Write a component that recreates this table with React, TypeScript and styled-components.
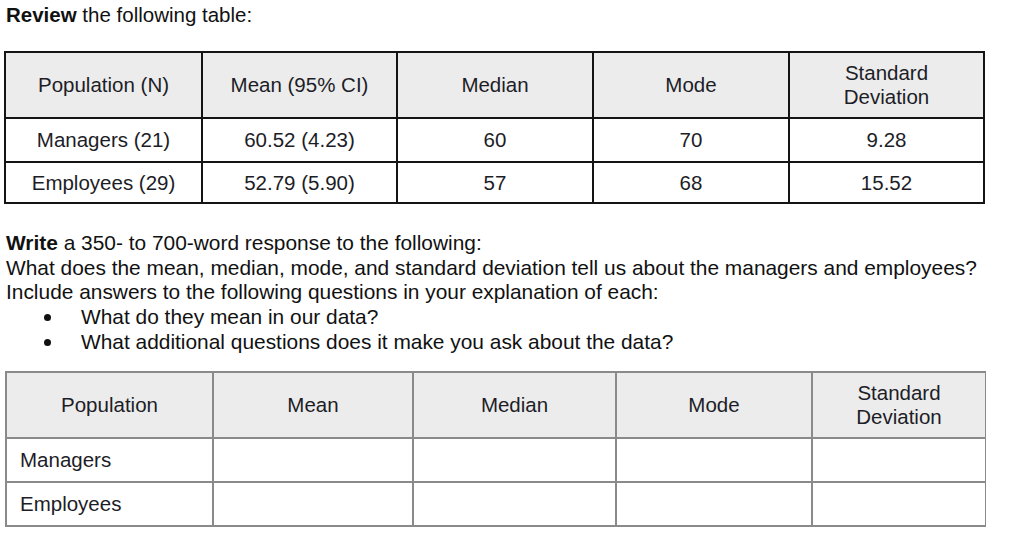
import React from "react";
import styled, { createGlobalStyle } from "styled-components";

const Global = createGlobalStyle`
  html, body { margin: 0; padding: 0; background: #ffffff; }
  body { font-family: "Liberation Sans", Arial, sans-serif; color: #1c1c24; }
`;

const Page = styled.div`
  width: 1024px;
  height: 542px;
  box-sizing: border-box;
  padding: 3px 0 0 5px;
  overflow: hidden;
`;

const Title = styled.p`
  margin: 0 0 24px 1px;
  font-size: 20.5px;
  line-height: 24px;
  color: #111;
`;

const Table = styled.div<{ $cols: string; $line: string; $width: number; $shift: number }>`
  display: grid;
  grid-template-columns: ${(p) => p.$cols};
  width: ${(p) => p.$width}px;
  margin-left: ${(p) => p.$shift}px;
  border: 2px solid ${(p) => p.$line};
  box-sizing: border-box;
  background: ${(p) => p.$line};
  gap: 2px;
`;

const Head = styled.div`
  background: #ececec;
  height: 64px;
  display: flex;
  align-items: center;
  justify-content: center;
  text-align: center;
  font-size: 20.5px;
  line-height: 24px;
  color: #1d1d27;
`;

const Cell = styled.div<{ $h: number; $align?: "left" | "center" }>`
  background: #fff;
  height: ${(p) => p.$h}px;
  display: flex;
  align-items: center;
  justify-content: ${(p) => (p.$align === "left" ? "flex-start" : "center")};
  padding: ${(p) => (p.$align === "left" ? "0 0 0 13px" : "0")};
  font-size: 20.5px;
  color: #1d1d27;
`;

const Prompt = styled.div`
  margin: 27px 0 0 1px;
  font-size: 20.9px;
  line-height: 24.7px;
  color: #111;
`;

const Line = styled.div`
  white-space: nowrap;
`;

const Bullets = styled.ul`
  margin: 0;
  padding: 0;
  list-style: none;
`;

const Bullet = styled.li`
  display: flex;
  align-items: center;
  white-space: nowrap;
  &::before {
    content: "";
    width: 7px;
    height: 7px;
    border-radius: 50%;
    background: #111;
    margin: 0 30px 0 38px;
    flex: none;
  }
`;

const Table2Wrap = styled.div`
  margin-top: 16px;
`;

const cols1 = "195px 193px 194px 194px 193px";
const cols2 = "205px 198px 201px 194px 172px";

export default function App() {
  const rows1 = [
    ["Managers (21)", "60.52 (4.23)", "60", "70", "9.28"],
    ["Employees (29)", "52.79 (5.90)", "57", "68", "15.52"],
  ];
  return (
    <>
      <Global />
      <Page>
        <Title>
          <b>Review</b> the following table:
        </Title>
        <Table $cols={cols1} $line="#141414" $width={981} $shift={-1}>
          <Head>Population (N)</Head>
          <Head>Mean (95% CI)</Head>
          <Head>Median</Head>
          <Head>Mode</Head>
          <Head>
            Standard
            <br />
            Deviation
          </Head>
          {rows1.map((r, i) =>
            r.map((c, j) => (
              <Cell key={`${i}-${j}`} $h={i === 0 ? 42 : 39}>
                {c}
              </Cell>
            ))
          )}
        </Table>
        <Prompt>
          <Line>
            <b>Write</b> a 350- to 700-word response to the following:
          </Line>
          <Line>
            What does the mean, median, mode, and standard deviation tell us about the managers and employees?
          </Line>
          <Line>Include answers to the following questions in your explanation of each:</Line>
          <Bullets>
            <Bullet>What do they mean in our data?</Bullet>
            <Bullet>What additional questions does it make you ask about the data?</Bullet>
          </Bullets>
        </Prompt>
        <Table2Wrap>
          <Table $cols={cols2} $line="#8a8a8a" $width={981} $shift={0}>
            <Head>Population</Head>
            <Head>Mean</Head>
            <Head>Median</Head>
            <Head>Mode</Head>
            <Head>
              Standard
              <br />
              Deviation
            </Head>
            {["Managers", "Employees"].map((name) => (
              <React.Fragment key={name}>
                <Cell $h={42} $align="left">
                  {name}
                </Cell>
                <Cell $h={42} />
                <Cell $h={42} />
                <Cell $h={42} />
                <Cell $h={42} />
              </React.Fragment>
            ))}
          </Table>
        </Table2Wrap>
      </Page>
    </>
  );
}
